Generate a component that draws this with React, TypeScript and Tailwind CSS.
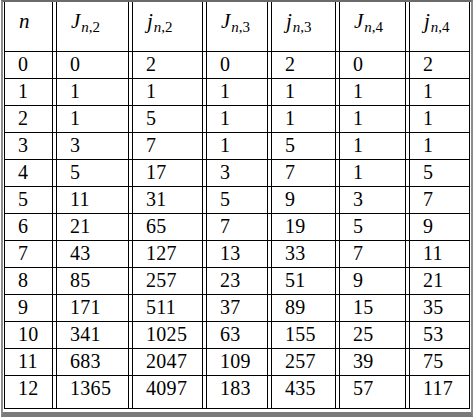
const widths = ["w-[47px]", "w-[71px]", "w-[69px]", "w-[60px]", "w-[63px]", "w-[65px]", "w-[59px]"];

const headers: { base: string; sub: string }[] = [
  { base: "n", sub: "" },
  { base: "J", sub: "2" },
  { base: "j", sub: "2" },
  { base: "J", sub: "3" },
  { base: "j", sub: "3" },
  { base: "J", sub: "4" },
  { base: "j", sub: "4" },
];

const rows = [
  [0, 0, 2, 0, 2, 0, 2],
  [1, 1, 1, 1, 1, 1, 1],
  [2, 1, 5, 1, 1, 1, 1],
  [3, 3, 7, 1, 5, 1, 1],
  [4, 5, 17, 3, 7, 1, 5],
  [5, 11, 31, 5, 9, 3, 7],
  [6, 21, 65, 7, 19, 5, 9],
  [7, 43, 127, 13, 33, 7, 11],
  [8, 85, 257, 23, 51, 9, 21],
  [9, 171, 511, 37, 89, 15, 35],
  [10, 341, 1025, 63, 155, 25, 53],
  [11, 683, 2047, 109, 257, 39, 75],
  [12, 1365, 4097, 183, 435, 57, 117],
];

function Sep() {
  return <div className="w-[5px] shrink-0 self-stretch border-x border-black" />;
}

function Row({ cells, tall }: { cells: number[]; tall?: boolean }) {
  return (
    <div className={`flex border-b border-black ${tall ? "h-[33px]" : "h-[27px]"}`}>
      {cells.map((c, i) => (
        <div key={i} className="flex">
          {i > 0 && <Sep />}
          <div className={`${widths[i]} shrink-0 pl-[13px] leading-[24px] tracking-[0.3px]`}>{c}</div>
        </div>
      ))}
    </div>
  );
}

export default function App() {
  return (
    <div className="w-[474px] h-[417px] bg-white overflow-hidden text-black text-[20px] font-['Liberation_Serif',serif]">
      <div className="ml-[1px] w-[472px] h-[417px] border-x-2 border-x-[#8c8c8c] border-t-2 border-t-[#6a6a6a] border-b-[5px] border-b-[#7a7a7a] px-[1px]">
        <div className="border-x border-black">
          {/* header */}
          <div className="flex h-[50px] border-b border-black">
            {headers.map((h, i) => (
              <div key={i} className="flex">
                {i > 0 && <Sep />}
                <div className={`${widths[i]} shrink-0 pl-[14px] pt-[7px] leading-[24px] whitespace-nowrap`}>
                  <span className="italic text-[21px]">{h.base}</span>
                  {h.sub && (
                    <span className="text-[15px] align-[-4px] ml-[1px]">
                      <span className="italic">n</span>,{h.sub}
                    </span>
                  )}
                </div>
              </div>
            ))}
          </div>
          {rows.map((r, i) => (
            <Row key={i} cells={r} tall={i === rows.length - 1} />
          ))}
        </div>
      </div>
    </div>
  );
}
